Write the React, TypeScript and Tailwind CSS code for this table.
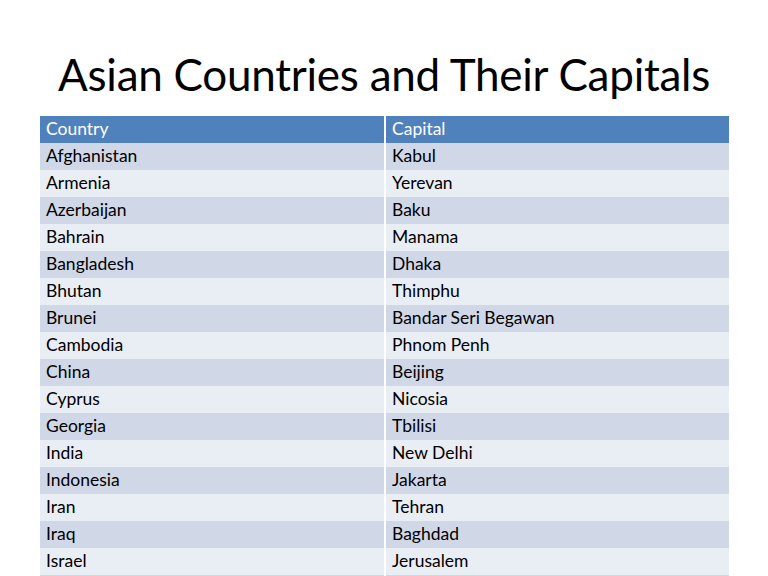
const rows: [string, string][] = [
  ["Afghanistan", "Kabul"],
  ["Armenia", "Yerevan"],
  ["Azerbaijan", "Baku"],
  ["Bahrain", "Manama"],
  ["Bangladesh", "Dhaka"],
  ["Bhutan", "Thimphu"],
  ["Brunei", "Bandar Seri Begawan"],
  ["Cambodia", "Phnom Penh"],
  ["China", "Beijing"],
  ["Cyprus", "Nicosia"],
  ["Georgia", "Tbilisi"],
  ["India", "New Delhi"],
  ["Indonesia", "Jakarta"],
  ["Iran", "Tehran"],
  ["Iraq", "Baghdad"],
  ["Israel", "Jerusalem"],
];

export default function App() {
  return (
    <div
      className="w-[768px] h-[576px] overflow-hidden bg-white text-black"
      style={{ fontFamily: "Lato, 'Open Sans', sans-serif" }}
    >
      <div className="h-[116px] pt-[52px] text-center">
        <h1 className="text-[44px] leading-none tracking-[-0.25px]">
          Asian Countries and Their Capitals
        </h1>
      </div>

      <div className="ml-[40px] w-[689px] flex flex-col gap-[1px] text-[17.5px]">
        <div className="grid grid-cols-[344px_343px] gap-x-[2px] h-[26px]">
          <div className="bg-[#4f81bd] text-white px-[6px] pb-[4px] flex items-center">Country</div>
          <div className="bg-[#4f81bd] text-white px-[6px] pb-[4px] flex items-center">Capital</div>
        </div>
        {rows.map(([country, capital], i) => {
          const bg = i % 2 === 0 ? "bg-[#d0d8e8]" : "bg-[#e9edf4]";
          return (
            <div key={country} className="grid grid-cols-[344px_343px] gap-x-[2px] h-[26px]">
              <div className={`${bg} px-[6px] pb-[4px] flex items-center`}>{country}</div>
              <div className={`${bg} px-[6px] pb-[4px] flex items-center`}>{capital}</div>
            </div>
          );
        })}
        {/* next row (Japan) starts just past the bottom edge */}
        <div className="grid grid-cols-[344px_343px] gap-x-[2px] h-[26px]">
          <div className="bg-[#d0d8e8]" />
          <div className="bg-[#d0d8e8]" />
        </div>
      </div>
    </div>
  );
}
